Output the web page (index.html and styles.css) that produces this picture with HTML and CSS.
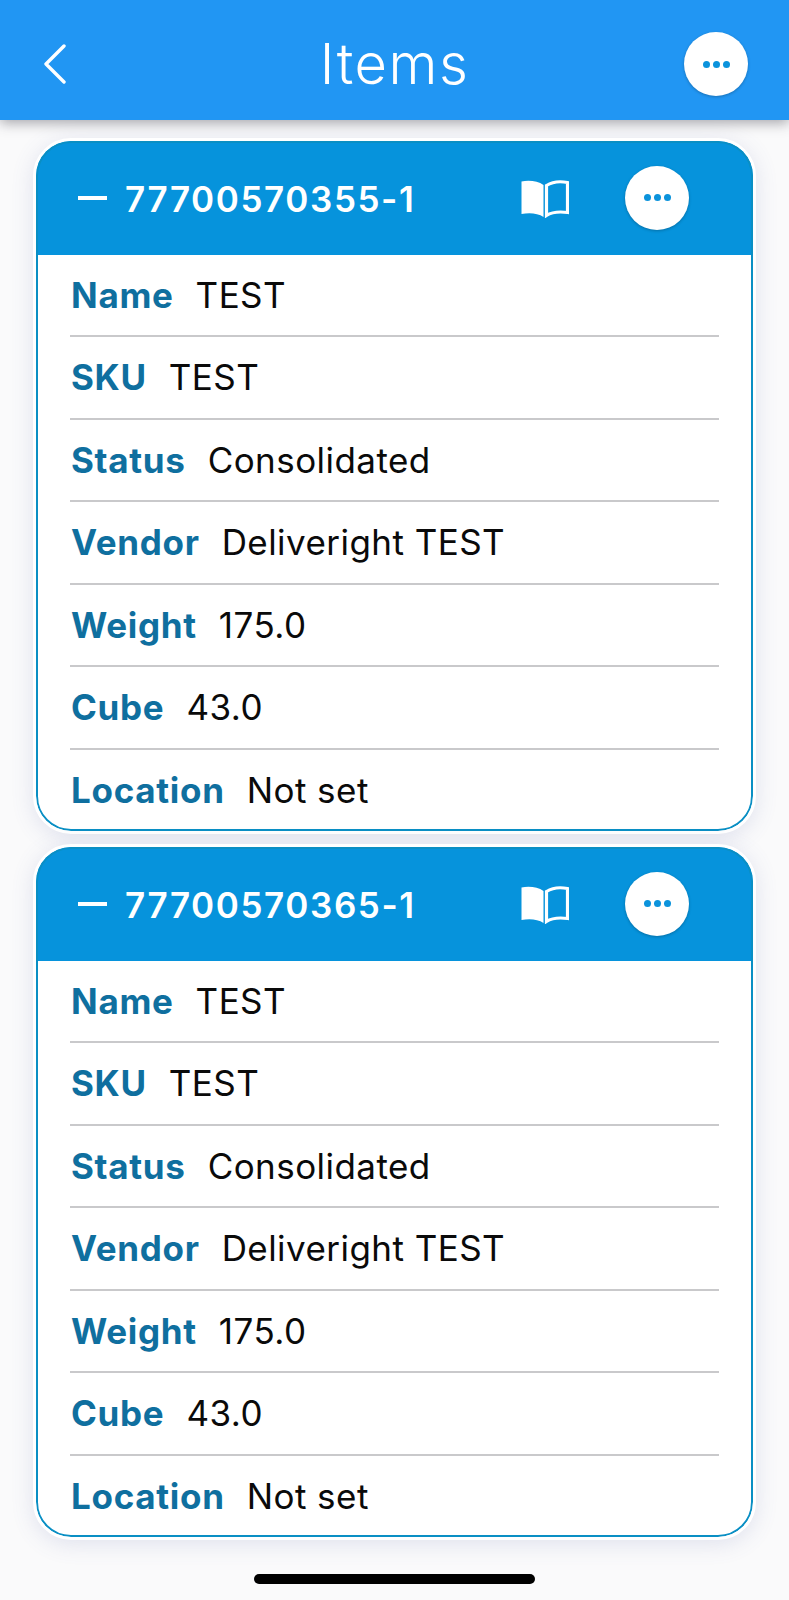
FILE: index.html
```html
<!DOCTYPE html>
<html lang="en">
<head>
    <meta charset="UTF-8">
    <meta name="viewport" content="width=device-width, initial-scale=1.0">
    <title>Items</title>
    <link rel="stylesheet" href="styles.css">
</head>
<body>

    <header class="topbar">
        <svg class="back-icon" width="24" height="40" viewBox="0 0 24 40">
            <path d="M21 2 L3 20 L21 38" fill="none" stroke="#fff" stroke-width="3.4" stroke-linecap="round" stroke-linejoin="round"/>
        </svg>
        <h1 class="topbar-title">Items</h1>
        <div class="more-btn"><span></span><span></span><span></span></div>
    </header>

    <main class="items">
        <section class="card">
            <div class="card-head">
                <div class="minus"></div>
                <div class="card-number">77700570355-1</div>
                <svg class="book-icon" width="48" height="39" viewBox="0 0 48 39">
                    <path d="M22.5 6 C17 2 8 1 0.5 2.5 V35 C8 33.500 17 34 22.500 38 Z" fill="#fff"/>
                    <path d="M25.500 6.500 C31 3 39 2 46.500 3.500 V33.500 C39 32.500 31 33 25.500 36.500 Z" fill="none" stroke="#fff" stroke-width="3.200"/>
                </svg>
                <div class="more-btn"><span></span><span></span><span></span></div>
            </div>
            <div class="row"><b>Name</b><span>TEST</span></div>
            <div class="row"><b>SKU</b><span>TEST</span></div>
            <div class="row"><b>Status</b><span>Consolidated</span></div>
            <div class="row"><b>Vendor</b><span>Deliveright TEST</span></div>
            <div class="row"><b>Weight</b><span>175.0</span></div>
            <div class="row"><b>Cube</b><span>43.0</span></div>
            <div class="row"><b>Location</b><span>Not set</span></div>
        </section>

        <section class="card">
            <div class="card-head">
                <div class="minus"></div>
                <div class="card-number">77700570365-1</div>
                <svg class="book-icon" width="48" height="39" viewBox="0 0 48 39">
                    <path d="M22.5 6 C17 2 8 1 0.5 2.5 V35 C8 33.500 17 34 22.500 38 Z" fill="#fff"/>
                    <path d="M25.500 6.500 C31 3 39 2 46.500 3.500 V33.500 C39 32.500 31 33 25.500 36.500 Z" fill="none" stroke="#fff" stroke-width="3.200"/>
                </svg>
                <div class="more-btn"><span></span><span></span><span></span></div>
            </div>
            <div class="row"><b>Name</b><span>TEST</span></div>
            <div class="row"><b>SKU</b><span>TEST</span></div>
            <div class="row"><b>Status</b><span>Consolidated</span></div>
            <div class="row"><b>Vendor</b><span>Deliveright TEST</span></div>
            <div class="row"><b>Weight</b><span>175.0</span></div>
            <div class="row"><b>Cube</b><span>43.0</span></div>
            <div class="row"><b>Location</b><span>Not set</span></div>
        </section>
    </main>

    <div class="home-bar"></div>

</body>
</html>
```

FILE: styles.css
```css
body {
    font-family: Inter, "Liberation Sans", sans-serif;
    background-color: #fafafb;
    margin: 0;
    padding: 0;
    height: 1600px;
    overflow: hidden;
}
.topbar {
    height: 112px;
    background-color: #2196f3;
    box-shadow: 0 3px 12px rgba(60, 60, 70, 0.45);
    display: flex;
    align-items: center;
    justify-content: space-between;
    padding: 8px 41px 0 43px;
    position: relative;
}
.topbar-title {
    margin: 0;
    color: white;
    font-size: 56px;
    font-weight: 300;
    letter-spacing: 1.5px;
    position: absolute;
    left: 0;
    right: 0;
    text-align: center;
    pointer-events: none;
}
.more-btn {
    width: 64px;
    height: 64px;
    border-radius: 50%;
    background-color: white;
    box-shadow: 0 1px 3px rgba(0, 0, 0, 0.25);
    display: flex;
    align-items: center;
    justify-content: center;
    gap: 3px;
    position: relative;
}
.more-btn span {
    width: 7px;
    height: 7px;
    border-radius: 50%;
    background-color: #0b93dc;
}
.items {
    padding: 18px 33px 0;
    display: flex;
    flex-direction: column;
    gap: 10px;
}
.card {
    border: 3px solid white;
    border-radius: 38px;
    background-color: white;
    box-shadow: 0 4px 22px rgba(90, 100, 170, 0.16);
    overflow: hidden;
    position: relative;
}
.card::after {
    content: "";
    position: absolute;
    inset: 0;
    border: 2px solid #0a8fc4;
    border-radius: 35px;
    pointer-events: none;
}
.card-head {
    height: 113.500px;
    background-color: #0693dc;
    display: flex;
    align-items: center;
    padding: 0 64px 0 42px;
    color: white;
}
.minus {
    width: 29px;
    height: 4px;
    background-color: white;
    margin-right: 18px;
}
.card-number {
    font-size: 35px;
    font-weight: 600;
    letter-spacing: 1.6px;
    flex: 1;
    padding-top: 3px;
}
.book-icon {
    margin-right: 56px;
    margin-top: 2px;
}
.row {
    height: 80.500px;
    margin: 0 34px;
    padding-left: 1px;
    border-bottom: 2px solid #c9c9cb;
    display: flex;
    align-items: center;
    gap: 22px;
    font-size: 35px;
    letter-spacing: 0.45px;
    color: #0a0a0a;
}
.row:last-child {
    border-bottom: none;
    height: 81.500px;
    padding-bottom: 0;
}
.row b {
    font-weight: 700;
    letter-spacing: 0.7px;
    color: #0f6f9f;
}
.home-bar {
    position: absolute;
    left: 254px;
    top: 1574px;
    width: 281px;
    height: 10px;
    border-radius: 5px;
    background-color: black;
}
```
